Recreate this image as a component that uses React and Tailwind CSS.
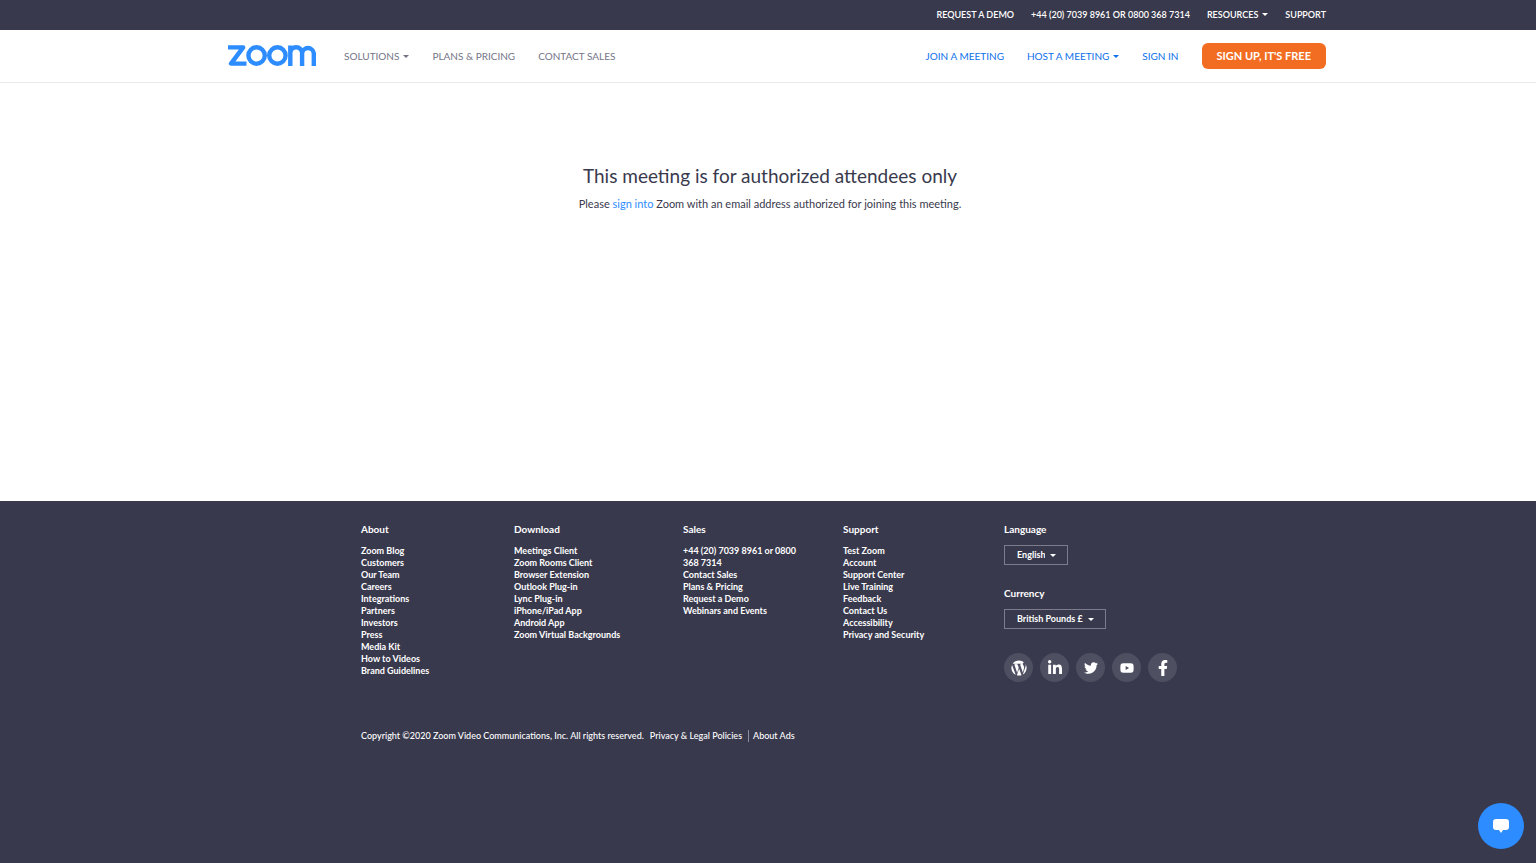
import React, { useState } from "react";
import { FaLinkedinIn, FaTwitter, FaYoutube, FaFacebookF } from "react-icons/fa";

const about = ["Zoom Blog", "Customers", "Our Team", "Careers", "Integrations", "Partners", "Investors", "Press", "Media Kit", "How to Videos", "Brand Guidelines"];
const download = ["Meetings Client", "Zoom Rooms Client", "Browser Extension", "Outlook Plug-in", "Lync Plug-in", "iPhone/iPad App", "Android App", "Zoom Virtual Backgrounds"];
const sales = ["+44 (20) 7039 8961 or 0800 368 7314", "Contact Sales", "Plans & Pricing", "Request a Demo", "Webinars and Events"];
const support = ["Test Zoom", "Account", "Support Center", "Live Training", "Feedback", "Contact Us", "Accessibility", "Privacy and Security"];

// the WordPress mark without its outer ring
const WordPressMark = ({ className }) => (
  <svg viewBox="32 38 448 436" className={`fill-current ${className}`} aria-hidden="true">
    <path d="M61.700 169.400l101.500 278C92.200 413 43.300 340.200 43.300 256c0-30.900 6.600-60.100 18.400-86.600zm337.900 75.900c0-26.300-9.400-44.500-17.500-58.700-10.800-17.500-20.900-32.400-20.900-49.900 0-19.600 14.800-37.800 35.700-37.800.9 0 1.800.1 2.800.2-37.900-34.700-88.300-55.900-143.700-55.900-74.300 0-139.700 38.100-177.800 95.900 5 .2 9.700.3 13.700.3 22.200 0 56.700-2.700 56.700-2.700 11.500-.7 12.800 16.200 1.400 17.500 0 0-11.500 1.300-24.300 2l77.500 230.400L249.800 247l-33.100-90.800c-11.500-.7-22.300-2-22.300-2-11.500-.7-10.100-18.200 1.300-17.500 0 0 35.100 2.700 56 2.700 22.200 0 56.700-2.700 56.700-2.700 11.500-.7 12.800 16.200 1.400 17.500 0 0-11.500 1.300-24.300 2l76.900 228.700 21.200-70.900c9-29.400 16-50.500 16-68.700zm-139.900 29.300l-63.800 185.500c19.100 5.600 39.200 8.700 60.100 8.700 24.800 0 48.500-4.300 70.600-12.100-.6-.9-1.100-1.900-1.500-2.900l-65.400-179.200zm183-120.700c.9 6.800 1.400 14 1.400 21.900 0 21.600-4 45.800-16.200 76.200l-65 187.900C426.200 403 468.700 334.500 468.700 256c0-37-9.400-71.800-26-102.100z" />
  </svg>
);

const socials = [
  { name: "WordPress", icon: WordPressMark, size: "size-4" },
  { name: "LinkedIn", icon: FaLinkedinIn, size: "size-4" },
  { name: "Twitter", icon: FaTwitter, size: "size-[14px]" },
  { name: "YouTube", icon: FaYoutube, size: "size-[14px]" },
  { name: "Facebook", icon: FaFacebookF, size: "size-4" },
];

const Caret = ({ className = "" }) => (
  <svg viewBox="0 0 6 3" className={`h-[3px] w-[6px] fill-current ${className}`} aria-hidden="true">
    <path d="M0 0h6L3 3z" />
  </svg>
);

const Logo = () => (
  <svg viewBox="0 0 88 22" className="h-[22px] w-[88px]" fill="none" stroke="#2d8cff" strokeWidth="4.4" strokeLinejoin="round" aria-hidden="true">
    <path d="M0 2.4H15.2L3 18.6H18.5" />
    <circle cx="28.6" cy="10.5" r="8.2" />
    <circle cx="49.4" cy="10.5" r="8.2" />
    <path d="M62.3 .4V21M62.3 8.2a5.9 5.9 0 0 1 11.8 0V21M74.1 8.2a5.9 5.9 0 0 1 11.7 0V21" />
  </svg>
);

const FooterColumn = ({ title, links }) => (
  <div>
    <h3 className="text-[10px] leading-3 font-bold">{title}</h3>
    <ul className="mt-[10px]">
      {links.map((link) => (
        <li key={link}>
          <a href="#" className="block max-w-[116px] hover:underline">{link}</a>
        </li>
      ))}
    </ul>
  </div>
);

const FooterSelect = ({ id, label, value, onChange, options }) => (
  <div>
    <label htmlFor={id} className="block text-[10px] leading-3 font-bold">{label}</label>
    <div className="relative mt-[10px] flex w-fit">
      <select
        id={id}
        value={value}
        onChange={(e) => onChange(e.target.value)}
        className="block h-5 appearance-none border border-[#7c7c8c] bg-[#39394d] pr-[22px] pl-3 font-bold [field-sizing:content]"
      >
        {options.map((o) => (
          <option key={o}>{o}</option>
        ))}
      </select>
      <Caret className="pointer-events-none absolute top-[9px] right-3" />
    </div>
  </div>
);

const App = () => {
  const [language, setLanguage] = useState("English");
  const [currency, setCurrency] = useState("British Pounds £");

  return (
    <div className="flex min-h-screen flex-col bg-white font-['Lato',sans-serif] text-[#39394d]">
      <div className="bg-[#39394d]">
        <div className="mx-auto flex h-[30px] max-w-[1116px] items-center justify-end gap-[17px] pb-px text-[9px] font-semibold text-white">
          <a href="#">REQUEST A DEMO</a>
          <a href="#">+44 (20) 7039 8961 OR 0800 368 7314</a>
          <button className="flex items-center gap-1">RESOURCES <Caret /></button>
          <a href="#">SUPPORT</a>
        </div>
      </div>

      <header className="border-b border-[#ececef]">
        <div className="mx-auto flex h-[52px] max-w-[1116px] items-center pl-[18px] text-[10px]">
          <a href="#" aria-label="Zoom"><Logo /></a>
          <nav className="ml-7 flex items-center gap-[23px] text-[#747487]">
            <button className="flex items-center gap-1">SOLUTIONS <Caret /></button>
            <a href="#">PLANS & PRICING</a>
            <a href="#">CONTACT SALES</a>
          </nav>
          <nav className="ml-auto flex items-center gap-[23px] text-[#0e71eb]">
            <a href="#">JOIN A MEETING</a>
            <button className="flex items-center gap-1">HOST A MEETING <Caret /></button>
            <a href="#">SIGN IN</a>
            <a href="#" className="rounded-md bg-[#f26d21] px-[15px] py-[5px] text-[11px] leading-4 font-bold text-white">SIGN UP, IT'S FREE</a>
          </nav>
        </div>
      </header>

      <main className="h-[418px] pt-[79px] pl-1 text-center">
        <h1 className="text-[19px] leading-7">This meeting is for authorized attendees only</h1>
        <p className="mt-[6px] text-[11px] leading-4">
          Please <a href="#" className="text-[#2d8cff]">sign into</a> Zoom with an email address authorized for joining this meeting.
        </p>
      </main>

      <footer className="grow bg-[#39394d] text-[9px] leading-3 font-bold text-white">
        <div className="mx-auto max-w-[818px] pt-[22px] pb-8 pl-[2px]">
          <div className="grid grid-cols-[153fr_169fr_160fr_161fr_173fr]">
            <FooterColumn title="About" links={about} />
            <FooterColumn title="Download" links={download} />
            <FooterColumn title="Sales" links={sales} />
            <FooterColumn title="Support" links={support} />
            <div className="flex flex-col">
              <FooterSelect id="language" label="Language" value={language} onChange={setLanguage} options={["English", "Español", "Deutsch", "Français"]} />
              <div className="mt-[22px]">
                <FooterSelect id="currency" label="Currency" value={currency} onChange={setCurrency} options={["British Pounds £", "US Dollars $", "Euros €"]} />
              </div>
              <div className="mt-6 flex gap-[7px]">
                {socials.map(({ name, icon: Icon, size }) => (
                  <a key={name} href="#" aria-label={name} className="flex size-[29px] items-center justify-center rounded-full bg-[#4f4f62]">
                    <Icon className={size} />
                  </a>
                ))}
              </div>
            </div>
          </div>
          <div className="mt-12 flex items-center font-medium">
            <span>Copyright ©2020 Zoom Video Communications, Inc. All rights reserved.</span>
            <a href="#" className="ml-[6px]">Privacy & Legal Policies</a>
            <a href="#" className="ml-[6px] border-l border-[#8f8f9d] pl-1">About Ads</a>
          </div>
        </div>
      </footer>

      <button aria-label="Chat" className="fixed right-3 bottom-[14px] flex size-[46px] items-center justify-center rounded-full bg-[#2d8cff]">
        <svg viewBox="0 0 16 14" className="h-[14px] w-4 fill-white" aria-hidden="true">
          <path d="M3 0h10a3 3 0 0 1 3 3v5a3 3 0 0 1-3 3h-3l-2 3-2-3H3a3 3 0 0 1-3-3V3a3 3 0 0 1 3-3z" />
        </svg>
      </button>
    </div>
  );
};

export default App;
